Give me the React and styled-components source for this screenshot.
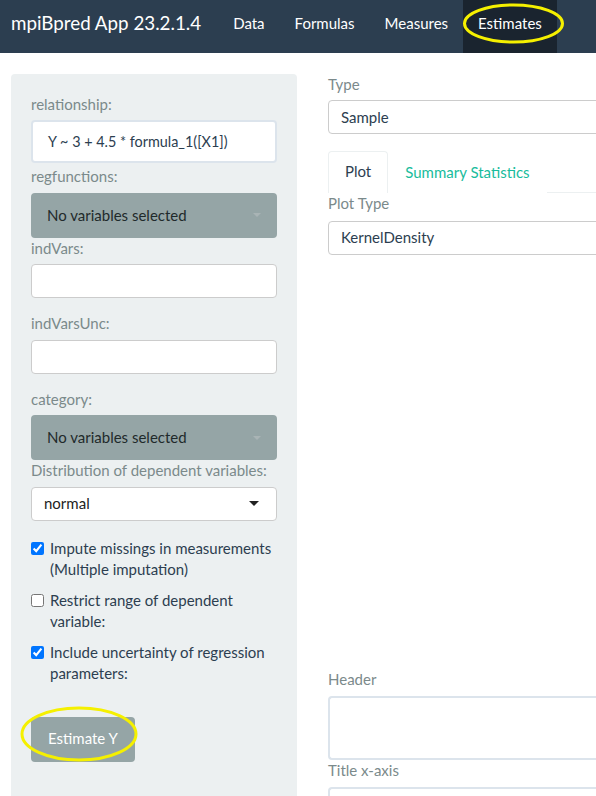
import React from 'react'
import styled, { createGlobalStyle } from 'styled-components'

const GlobalStyle = createGlobalStyle`
  html, body {
    margin: 0;
    padding: 0;
    overflow: hidden;
    background: #ffffff;
  }
  body {
    font-family: Lato, "Open Sans", sans-serif;
    font-size: 15px;
    line-height: 1.428571;
    color: #2c3e50;
  }
  * { box-sizing: border-box; }
`

const Page = styled.div`
  position: relative;
  width: 596px;
  height: 796px;
  overflow: hidden;
`

const Navbar = styled.nav`
  height: 53px;
  background: #2c3e50;
  display: flex;
  align-items: stretch;
  padding-left: 11px;
`

const Brand = styled.div`
  color: #ffffff;
  font-size: 18.8px;
  display: flex;
  align-items: center;
  padding: 0 17px 6px 0;
  white-space: nowrap;
`

const NavList = styled.ul`
  display: flex;
  list-style: none;
  margin: 0;
  padding: 0;
`

const NavItem = styled.li`
  display: flex;
  align-items: center;
  padding: 0 15px 6px;
  color: #ffffff;
  font-size: 15px;
  background: ${p => (p.$active ? '#1a242f' : 'transparent')};
`

const Content = styled.div`
  display: flex;
  align-items: flex-start;
  padding: 21px 0 0 11px;
  gap: 31px;
`

const Well = styled.div`
  width: 286px;
  min-height: 760px;
  flex-shrink: 0;
  background: #ecf0f1;
  border-radius: 4px;
  padding: 20px 20px;
`

const Main = styled.div`
  width: 320px;
  flex-shrink: 0;
`

const Group = styled.div`
  margin-bottom: ${p => p.$mb ?? 15}px;
`

const Label = styled.div`
  color: #7b8a8b;
  font-size: 15px;
  margin-bottom: ${p => p.$mb ?? 5}px;
  white-space: nowrap;
`

const TextBox = styled.div`
  height: ${p => p.$h || 34}px;
  background: #ffffff;
  border: ${p => (p.$thick ? '2px solid #dce4ec' : '1px solid #cccccc')};
  border-radius: 4px;
  padding: 0 ${p => (p.$thick ? 15 : 12)}px;
  display: flex;
  align-items: center;
  color: #2c3e50;
  font-size: ${p => p.$fs || 15}px;
  white-space: nowrap;
  overflow: hidden;
`

const TextArea = styled.div`
  height: 64px;
  border: 2px solid #dce4ec;
  border-right: none;
  border-radius: 4px 0 0 4px;
  background: #ffffff;
`

const PickerButton = styled.div`
  height: 45px;
  background: #95a5a6;
  border-radius: 4px;
  padding: 0 16px;
  display: flex;
  align-items: center;
  justify-content: space-between;
  color: #1f2a2b;
  font-size: 15px;
`

const Caret = styled.span`
  width: 0;
  height: 0;
  border-left: ${p => p.$size}px solid transparent;
  border-right: ${p => p.$size}px solid transparent;
  border-top: ${p => p.$size}px solid ${p => p.$color};
`

const SelectBox = styled.div`
  height: 34px;
  background: #ffffff;
  border: 1px solid #cccccc;
  border-radius: 4px;
  padding: 0 17px 0 12px;
  display: flex;
  align-items: center;
  justify-content: space-between;
  color: #222222;
  font-size: 15px;
`

const CheckRow = styled.label`
  display: flex;
  align-items: flex-start;
  gap: 6px;
  margin: ${p => p.$mt ?? 10}px 0 0;
  color: #2c3e50;
  font-size: 15px;
  line-height: 21px;
`

const CheckInput = styled.input`
  width: 13px;
  height: 13px;
  margin: 4px 0 0 0;
  flex-shrink: 0;
`

const Button = styled.div`
  display: inline-flex;
  align-items: center;
  justify-content: center;
  width: 104px;
  height: 45px;
  margin-top: 33px;
  background: #95a5a6;
  border-radius: 4px;
  color: #ffffff;
  font-size: 15px;
`

const Tabs = styled.div`
  display: flex;
  align-items: flex-end;
  height: 42px;
  margin-top: 17px;
  border-bottom: 1px solid #ecf0f1;
`

const Tab = styled.div`
  height: ${p => (p.$active ? 42 : 41)}px;
  padding: 0 16px 2px;
  display: flex;
  align-items: center;
  font-size: 15px;
  color: ${p => (p.$active ? '#2c3e50' : '#18bc9c')};
  background: #ffffff;
  border: 1px solid ${p => (p.$active ? '#ecf0f1' : 'transparent')};
  border-bottom: none;
  border-radius: 4px 4px 0 0;
  margin-bottom: -1px;
`

const PlotArea = styled.div`
  height: 414px;
`

const Highlight = styled.svg`
  position: absolute;
  left: 0;
  top: 0;
  pointer-events: none;
`

export default function App() {
  return (
    <Page>
      <GlobalStyle />
      <Navbar>
        <Brand>mpiBpred App 23.2.1.4</Brand>
        <NavList>
          <NavItem>Data</NavItem>
          <NavItem>Formulas</NavItem>
          <NavItem>Measures</NavItem>
          <NavItem $active>Estimates</NavItem>
        </NavList>
      </Navbar>
      <Content>
        <Well>
          <Group $mb={3}>
            <Label>relationship:</Label>
            <TextBox $thick $h={43} $fs={14.4}>Y ~ 3 + 4.5 * formula_1([X1])</TextBox>
          </Group>
          <Group $mb={0}>
            <Label>regfunctions:</Label>
            <PickerButton>
              No variables selected
              <Caret $size={4} $color="#a9b4b5" />
            </PickerButton>
          </Group>
          <Group>
            <Label>indVars:</Label>
            <TextBox />
          </Group>
          <Group>
            <Label>indVarsUnc:</Label>
            <TextBox />
          </Group>
          <Group $mb={0}>
            <Label>category:</Label>
            <PickerButton>
              No variables selected
              <Caret $size={4} $color="#a9b4b5" />
            </PickerButton>
          </Group>
          <Group $mb={0}>
            <Label>Distribution of dependent variables:</Label>
            <SelectBox>
              normal
              <Caret $size={5} $color="#222222" />
            </SelectBox>
          </Group>
          <CheckRow $mt={17}>
            <CheckInput type="checkbox" defaultChecked />
            <span>Impute missings in measurements (Multiple imputation)</span>
          </CheckRow>
          <CheckRow>
            <CheckInput type="checkbox" />
            <span>Restrict range of dependent variable:</span>
          </CheckRow>
          <CheckRow>
            <CheckInput type="checkbox" defaultChecked />
            <span>Include uncertainty of regression parameters:</span>
          </CheckRow>
          <Button>Estimate Y</Button>
        </Well>
        <Main>
          <Label>Type</Label>
          <TextBox>Sample</TextBox>
          <Tabs>
            <Tab $active>Plot</Tab>
            <Tab>Summary Statistics</Tab>
          </Tabs>
          <Label $mb={6}>Plot Type</Label>
          <TextBox>KernelDensity</TextBox>
          <PlotArea />
          <Label $mb={6}>Header</Label>
          <TextArea />
          <Label>Title x-axis</Label>
          <TextArea />
        </Main>
      </Content>
      <Highlight width="596" height="796">
        <ellipse cx="513.5" cy="23.5" rx="49" ry="18.5" fill="none" stroke="#f5f000" strokeWidth="3" />
        <ellipse cx="79" cy="734" rx="57" ry="26" fill="none" stroke="#f5f000" strokeWidth="3" />
      </Highlight>
    </Page>
  )
}
